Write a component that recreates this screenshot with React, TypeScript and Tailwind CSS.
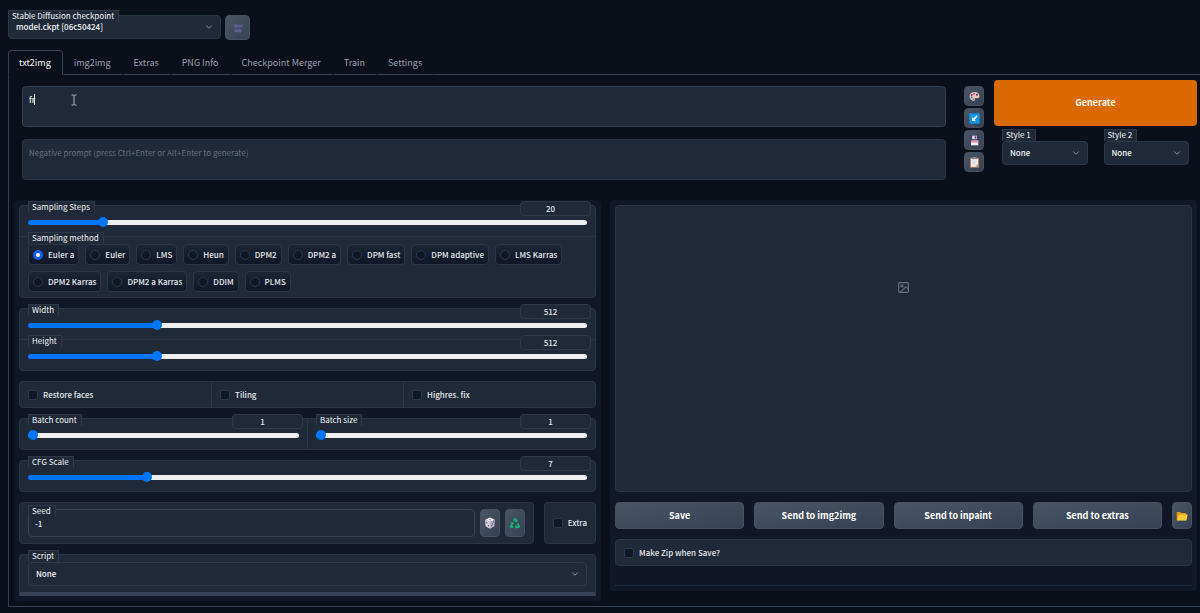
import { useId, useState } from "react"
import type { CSSProperties, ReactNode } from "react"
import { ChevronDown, Image as ImageIcon } from "lucide-react"
import clsx from "clsx"

const TABS = ["txt2img", "img2img", "Extras", "PNG Info", "Checkpoint Merger", "Train", "Settings"]

const SAMPLERS = [
  "Euler a",
  "Euler",
  "LMS",
  "Heun",
  "DPM2",
  "DPM2 a",
  "DPM fast",
  "DPM adaptive",
  "LMS Karras",
  "DPM2 Karras",
  "DPM2 a Karras",
  "DDIM",
  "PLMS",
]

const LABEL =
  "border border-b-0 border-[#2e3947] bg-[#1f2937] pr-1 pb-[2px] pl-[3px] text-[8px] leading-[9px] font-normal text-gray-100"
const GRAY_BUTTON =
  "flex items-center justify-center rounded border border-[#46505f] bg-gradient-to-br from-gray-600 to-gray-700 text-white"

function Block({ className, children }: { className?: string; children: ReactNode }) {
  return <div className={clsx("rounded border border-[#2b3645] bg-[#1f2937]", className)}>{children}</div>
}

function Slider({ label, min = 1, max, initial }: { label: string; min?: number; max: number; initial: number }) {
  const id = useId()
  const [value, setValue] = useState(initial)
  const ratio = (value - min) / (max - min)
  const fill = { "--stop": `calc(5px + (100% - 10px) * ${ratio})` } as CSSProperties

  return (
    <div className="min-w-0 flex-1 px-2 pb-[9px]">
      <div className="-mt-[5px] -mr-1 flex h-[14px] items-start justify-between">
        <label htmlFor={id} className={LABEL}>
          {label}
        </label>
        <input
          type="number"
          aria-label={`${label} value`}
          value={value}
          onChange={(e) => setValue(Number(e.target.value))}
          className="h-[15px] w-[71px] rounded border border-[#2e3947] bg-[#1f2937] pr-[10px] text-center text-[8px] leading-[12px] text-gray-200 outline-none [appearance:textfield] [&::-webkit-inner-spin-button]:appearance-none"
        />
      </div>
      <input
        id={id}
        type="range"
        min={min}
        max={max}
        value={value}
        onChange={(e) => setValue(Number(e.target.value))}
        style={fill}
        className="mt-[2px] block h-[10px] w-full appearance-none bg-transparent [&::-webkit-slider-runnable-track]:h-[5px] [&::-webkit-slider-runnable-track]:rounded-full [&::-webkit-slider-runnable-track]:bg-[linear-gradient(to_right,#0075ff_var(--stop),#efefef_var(--stop))] [&::-webkit-slider-thumb]:-mt-[3px] [&::-webkit-slider-thumb]:h-[10px] [&::-webkit-slider-thumb]:w-[10px] [&::-webkit-slider-thumb]:appearance-none [&::-webkit-slider-thumb]:rounded-full [&::-webkit-slider-thumb]:bg-[#0075ff]"
      />
    </div>
  )
}

function Check({ label, className }: { label: string; className?: string }) {
  return (
    <label className={clsx("flex h-[25px] items-center gap-[5px] px-2 text-[8px] text-gray-200", className)}>
      <input
        type="checkbox"
        className="h-[10px] w-[10px] shrink-0 appearance-none rounded-xs border border-[#2e3947] bg-gray-900 checked:bg-blue-600"
      />
      {label}
    </label>
  )
}

function Select({ id, option, className }: { id: string; option: string; className?: string }) {
  return (
    <div className="relative">
      <select
        id={id}
        className={clsx(
          "block h-6 w-full appearance-none rounded border bg-[#1f2937] px-[7px] text-[8px] text-gray-100 outline-none",
          className ?? "border-[#2e3947]",
        )}
      >
        <option>{option}</option>
      </select>
      <ChevronDown className="pointer-events-none absolute top-[7px] right-[7px] h-[10px] w-[10px] text-gray-400" />
    </div>
  )
}

function StyleSelect({ id, label }: { id: string; label: string }) {
  return (
    <div className="flex flex-1 flex-col items-start">
      <label htmlFor={id} className={LABEL}>
        {label}
      </label>
      <div className="w-full">
        <Select id={id} option="None" />
      </div>
    </div>
  )
}

function SwapIcon() {
  return (
    <svg viewBox="0 0 12 12" className="h-3 w-3" fill="#5d5b96">
      <path d="M1 4 4.500 1.200V2.800h6.500v2.400h-6.500v1.500z" />
      <path d="M2.500 7.300h5V6.300l3 2.600-3 2.600V10.300h-5z" />
    </svg>
  )
}

function PaletteIcon() {
  return (
    <svg viewBox="0 0 16 16" className="h-[11px] w-[11px]">
      <path
        d="M8 1.5C3.6 1.5.8 4.400.8 8s3 6.300 6 6.300c1.800 0 1.600-1.400 1.500-2.300-.1-1.300 1-1.900 2.400-1.600 2.200.5 4.500-.2 4.500-3C15.200 3.800 12 1.500 8 1.500z"
        fill="#eec3b4"
      />
      <circle cx="4" cy="6" r="1.500" fill="#c2334b" />
      <circle cx="7.500" cy="4" r="1.400" fill="#8d5fc4" />
      <circle cx="11.500" cy="5.500" r="1.500" fill="#3b3f4a" />
      <circle cx="3.800" cy="9.500" r="1.400" fill="#3c88d8" />
      <circle cx="6" cy="12" r="1.200" fill="#3ea66c" />
    </svg>
  )
}

function ArrowIcon() {
  return (
    <svg viewBox="0 0 16 16" className="h-[11px] w-[11px]">
      <rect x=".5" y=".5" width="15" height="15" rx="1.500" fill="#0c93ea" />
      <path d="M12 4 6 10" stroke="#fff" strokeWidth="2.200" />
      <path d="M4.300 6v5.700H10z" fill="#fff" />
    </svg>
  )
}

function FloppyIcon() {
  return (
    <svg viewBox="0 0 16 16" className="h-[11px] w-[11px]">
      <path d="M1.500 1h12l1.500 1.500V15h-13.500z" fill="#4c3f63" />
      <rect x="4.500" y="1" width="7" height="5" fill="#d9d5e4" />
      <rect x="8.500" y="1.800" width="2" height="3.400" fill="#4c3f63" />
      <rect x="3" y="8" width="10.500" height="7" fill="#f4eff5" />
      <path d="M3 10h10.500" stroke="#e0566e" strokeWidth="1.400" />
    </svg>
  )
}

function ClipboardIcon() {
  return (
    <svg viewBox="0 0 16 16" className="h-[11px] w-[11px]">
      <rect x="1.500" y="1" width="13" height="14.500" rx="1" fill="#b98763" />
      <path d="M3 2.800h10v8.200L10 14H3z" fill="#f3eff0" />
      <path d="M10 14v-3h3z" fill="#b9bac4" />
      <rect x="5" y=".3" width="6" height="3" rx=".8" fill="#8e93a3" />
      <path d="M5 6h6M5 8h6M5 10h4" stroke="#c3c4cd" strokeWidth=".8" />
    </svg>
  )
}

function DiceIcon() {
  return (
    <svg viewBox="0 0 16 16" className="h-3 w-3">
      <path d="M8 .8 14.500 3.500 8 6.500 1.500 3.500z" fill="#f6f3f8" />
      <path d="M1.500 3.500 8 6.500v9l-6-3.300z" fill="#d5d0dc" />
      <path d="M14.500 3.500 8 6.500v9l6-3.300z" fill="#b9b2c4" />
      <circle cx="8" cy="3.600" r="1.100" fill="#d34860" />
      <circle cx="3.700" cy="7.500" r=".8" fill="#4a4358" />
      <circle cx="6" cy="11.500" r=".8" fill="#4a4358" />
      <circle cx="10" cy="11.800" r=".8" fill="#4a4358" />
      <circle cx="11.200" cy="9.200" r=".8" fill="#4a4358" />
      <circle cx="12.500" cy="6.600" r=".8" fill="#4a4358" />
    </svg>
  )
}

function RecycleIcon() {
  return (
    <svg viewBox="0 0 16 16" className="h-3 w-3" fill="#0fb573">
      <path d="M5.500 4.500 7 1.800Q8 .6 9.200 1.800l1.200 2 1.200-.6-.8 4-3.800-1.300 1.200-.8L7.800 4 6.900 5.500z" />
      <path d="m3.800 6.300 3 2.800-1.300.4-1.300 2.600h1.600v2.500H2.500Q.6 14.200 1.300 12.400l2-3.800L2 8.200z" />
      <path d="m12.300 7.800 2.400 4.300q.5 2-1.500 2.500h-2.900V16L7.500 13.200l2.800-2.800V12h1.800l-1.800-3.100z" />
    </svg>
  )
}

function FolderIcon() {
  return (
    <svg viewBox="0 0 16 16" className="h-3 w-3">
      <path d="M1 2.500h4.500L7 4h6.500v9.500H1z" fill="#e59a13" />
      <path d="M3.500 6H15.500l-1.600 8H1z" fill="#ffca3a" />
    </svg>
  )
}

function TextCursor() {
  return (
    <svg viewBox="0 0 6 12" className="pointer-events-none absolute top-2 left-[49px] h-3 w-[6px]" fill="none" stroke="#c3c7ce">
      <path d="M.5 1H2.500L3 1.500 3.500 1H5.500M3 1.500v9M.5 11H2.500L3 10.500l.5.5H5.500" strokeWidth=".9" />
    </svg>
  )
}

const TOOLS = [
  { name: "Roll artist", icon: <PaletteIcon /> },
  { name: "Read generation parameters", icon: <ArrowIcon /> },
  { name: "Save style", icon: <FloppyIcon /> },
  { name: "Apply style", icon: <ClipboardIcon /> },
]

function PromptRow() {
  return (
    <div className="flex items-start pl-2">
      <div className="flex min-w-0 flex-1 flex-col gap-3 pt-[6px]">
        <div className="relative">
          <textarea
            aria-label="Prompt"
            defaultValue="fr"
            className="block h-[41px] w-full resize-none rounded border border-gray-700 bg-[#1f2937] px-[6px] py-[7px] text-[8px] leading-3 text-gray-100 outline-none"
          />
          <span className="absolute top-2 left-3 h-[11px] w-px bg-gray-200" />
          <TextCursor />
        </div>
        <textarea
          aria-label="Negative prompt"
          placeholder="Negative prompt (press Ctrl+Enter or Alt+Enter to generate)"
          className="block h-[41px] w-full resize-none rounded border border-[#2e3947] bg-[#1f2937] px-[6px] py-[7px] text-[8px] leading-3 font-normal text-gray-100 outline-none placeholder:text-gray-500"
        />
      </div>
      <div className="mr-[10px] ml-[18px] flex flex-col gap-[2px] pt-[6px]">
        {TOOLS.map((tool) => (
          <button key={tool.name} aria-label={tool.name} className={clsx(GRAY_BUTTON, "h-5 w-5")}>
            {tool.icon}
          </button>
        ))}
      </div>
      <div className="w-[203px]">
        <button className="block h-[46px] w-full rounded bg-[#d96900] text-[9px] font-bold text-orange-50">Generate</button>
        <div className="mt-[3px] flex gap-4 px-2">
          <StyleSelect id="style1" label="Style 1" />
          <StyleSelect id="style2" label="Style 2" />
        </div>
      </div>
    </div>
  )
}

function SettingsColumn() {
  return (
    <div className="flex min-w-0 flex-1 flex-col gap-[10px] rounded bg-gray-900 p-[5px]">
      <Block>
        <Slider label="Sampling Steps" max={150} initial={20} />
        <div role="radiogroup" aria-labelledby="sampler" className="border-t border-[#2b3645] px-2 pb-[5px]">
          <div className="-mt-[5px] flex">
            <span id="sampler" className={LABEL}>
              Sampling method
            </span>
          </div>
          <div className="flex flex-wrap gap-[6px]">
            {SAMPLERS.map((name, i) => (
              <label
                key={name}
                className="flex h-[21px] items-center gap-[5px] rounded border border-[#2b3645] bg-gradient-to-b from-[#1b2534] to-gray-900 px-[4px] text-[8px] text-gray-200"
              >
                <input
                  type="radio"
                  name="sampler"
                  defaultChecked={i === 0}
                  className="h-[10px] w-[10px] appearance-none rounded-full border border-[#2e3947] bg-gray-900 checked:border-[3px] checked:border-blue-600 checked:bg-white"
                />
                {name}
              </label>
            ))}
          </div>
        </div>
      </Block>

      <Block>
        <Slider label="Width" min={64} max={2048} initial={512} />
        <div className="border-t border-[#2b3645]">
          <Slider label="Height" min={64} max={2048} initial={512} />
        </div>
      </Block>

      <Block className="flex divide-x divide-[#2b3645]">
        <Check label="Restore faces" className="flex-1" />
        <Check label="Tiling" className="flex-1" />
        <Check label="Highres. fix" className="flex-1" />
      </Block>

      <Block className="flex divide-x divide-[#2b3645]">
        <Slider label="Batch count" max={16} initial={1} />
        <Slider label="Batch size" max={8} initial={1} />
      </Block>

      <Block>
        <Slider label="CFG Scale" max={30} initial={7} />
      </Block>

      <div className="flex gap-[10px]">
        <Block className="flex flex-1 gap-[5px] px-2 py-[6px]">
          <div className="relative flex-1">
            <label htmlFor="seed" className={clsx(LABEL, "absolute -top-1 left-0")}>
              Seed
            </label>
            <input
              id="seed"
              defaultValue="-1"
              className="block h-7 w-full rounded border border-gray-700 bg-[#1f2937] px-[6px] text-[8px] text-gray-100 outline-none"
            />
          </div>
          <button aria-label="Random seed" className={clsx(GRAY_BUTTON, "h-7 w-5")}>
            <DiceIcon />
          </button>
          <button aria-label="Reuse seed" className={clsx(GRAY_BUTTON, "h-7 w-5")}>
            <RecycleIcon />
          </button>
        </Block>
        <Block className="flex items-center">
          <Check label="Extra" />
        </Block>
      </div>

      <Block className="rounded-b-none border-b-4 border-b-gray-700 px-2 pb-[6px]">
        <div className="-mt-[5px] flex">
          <label htmlFor="script" className={LABEL}>
            Script
          </label>
        </div>
        <Select id="script" option="None" />
      </Block>
    </div>
  )
}

function ResultColumn() {
  return (
    <div className="flex min-w-0 flex-1 flex-col gap-[10px] self-start rounded bg-gray-900 p-[5px]">
      <Block className="h-[287px]">
        <div className="flex h-[163px] items-center justify-center">
          <ImageIcon className="h-[13px] w-[13px] text-gray-500" />
        </div>
      </Block>
      <div className="flex h-[27px] gap-[10px] text-[9px] font-bold">
        {["Save", "Send to img2img", "Send to inpaint", "Send to extras"].map((text) => (
          <button key={text} className={clsx(GRAY_BUTTON, "flex-1")}>
            {text}
          </button>
        ))}
        <button aria-label="Open folder" className={clsx(GRAY_BUTTON, "w-5")}>
          <FolderIcon />
        </button>
      </div>
      <Block>
        <Check label="Make Zip when Save?" />
      </Block>
      <hr className="mt-[9px] border-gray-800" />
    </div>
  )
}

export default function App() {
  return (
    <div className="min-h-screen bg-[#0b0f19] pt-[15px] pb-[6px] pl-2 font-['Noto_Sans_CJK_SC',sans-serif] font-medium text-gray-200">
      <header className="flex gap-1">
        <div className="relative w-[213px]">
          <Select id="checkpoint" option="model.ckpt [06c50424]" className="border-[#2b3645]" />
          <label htmlFor="checkpoint" className={clsx(LABEL, "absolute -top-[5px] left-0")}>
            Stable Diffusion checkpoint
          </label>
        </div>
        <button aria-label="Refresh checkpoints" className={clsx(GRAY_BUTTON, "h-[25px] w-[25px]")}>
          <SwapIcon />
        </button>
      </header>

      <nav className="mt-[10px] flex h-[25px] font-normal">
        {TABS.map((tab, i) => (
          <button
            key={tab}
            className={clsx(
              "border pr-[11px] pl-[10px] text-[9px] leading-[23px]",
              i === 0
                ? "rounded-t border-gray-700 border-b-transparent text-gray-100"
                : "border-transparent border-b-gray-700 text-gray-400",
            )}
          >
            {tab}
          </button>
        ))}
        <span className="flex-1 border-b border-gray-700" />
      </nav>

      <main className="border-b border-l border-gray-700 pt-[5px] pr-[3px] pb-[5px] pl-[5px]">
        <PromptRow />
        <div className="mt-5 flex gap-[9px]">
          <SettingsColumn />
          <ResultColumn />
        </div>
      </main>
    </div>
  )
}
